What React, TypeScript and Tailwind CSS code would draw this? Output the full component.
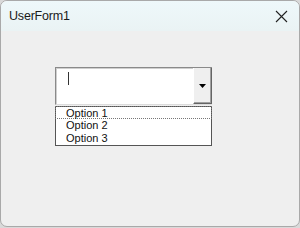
import React from "react";

const options = ["Option 1", "Option 2", "Option 3"];

function CloseIcon() {
  return (
    <svg width="13" height="13" viewBox="0 0 13 13" className="block">
      <path d="M1 1 L12 12 M12 1 L1 12" stroke="#222" strokeWidth="1.1" />
    </svg>
  );
}

export default function App() {
  return (
    <div className="w-[300px] h-[228px] bg-[#d9d9d9]">
      <div className="w-[300px] h-[227px] rounded-[7px] border border-[#a9a9a9] bg-[#efefef] overflow-hidden flex flex-col font-['Liberation_Sans',Arial,sans-serif]">
        {/* title bar */}
        <div className="h-[30px] shrink-0 flex items-center justify-between pl-[8px] pr-[11px] bg-gradient-to-b from-[#eef8fa] to-[#eaf3f4]">
          <span className="text-[12.5px] text-[#1a1a1a] tracking-[-0.2px]">UserForm1</span>
          <CloseIcon />
        </div>

        {/* form body */}
        <div className="flex-1 pt-[36px] pl-[54px]">
          <div className="w-[157px]">
            {/* combo box */}
            <div className="h-[38px] flex bg-white border border-[#8a8a8a] border-r-0 border-b-[#dcdcdc] shadow-[inset_1px_1px_0_#cfcfcf]">
              <div className="flex-1 relative">
                <div className="absolute left-[12px] top-[4px] w-px h-[13px] bg-[#333]" />
              </div>
              <div className="w-[19px] flex items-center justify-center bg-[#efefef] border-l border-l-white border-r border-r-[#646464] border-b border-b-[#646464] shadow-[inset_-1px_-1px_0_#a0a0a0]">
                <svg width="7" height="4" viewBox="0 0 7 4" className="block">
                  <path d="M0 0 H7 L3.5 4 Z" fill="#000" />
                </svg>
              </div>
            </div>

            {/* list */}
            <div className="mt-px bg-white border border-[#555] flex flex-col">
              {options.map((opt, i) => (
                <div
                  key={opt}
                  className={
                    i === 0
                      ? "h-[13px] leading-[12px] pl-[10px] text-[11px] text-[#111] border border-dotted border-[#777] -mx-px -mt-px"
                      : "h-[13px] leading-[13px] pl-[10px] text-[11px] text-[#111]"
                  }
                >
                  {opt}
                </div>
              ))}
            </div>
          </div>
        </div>
      </div>
    </div>
  );
}
